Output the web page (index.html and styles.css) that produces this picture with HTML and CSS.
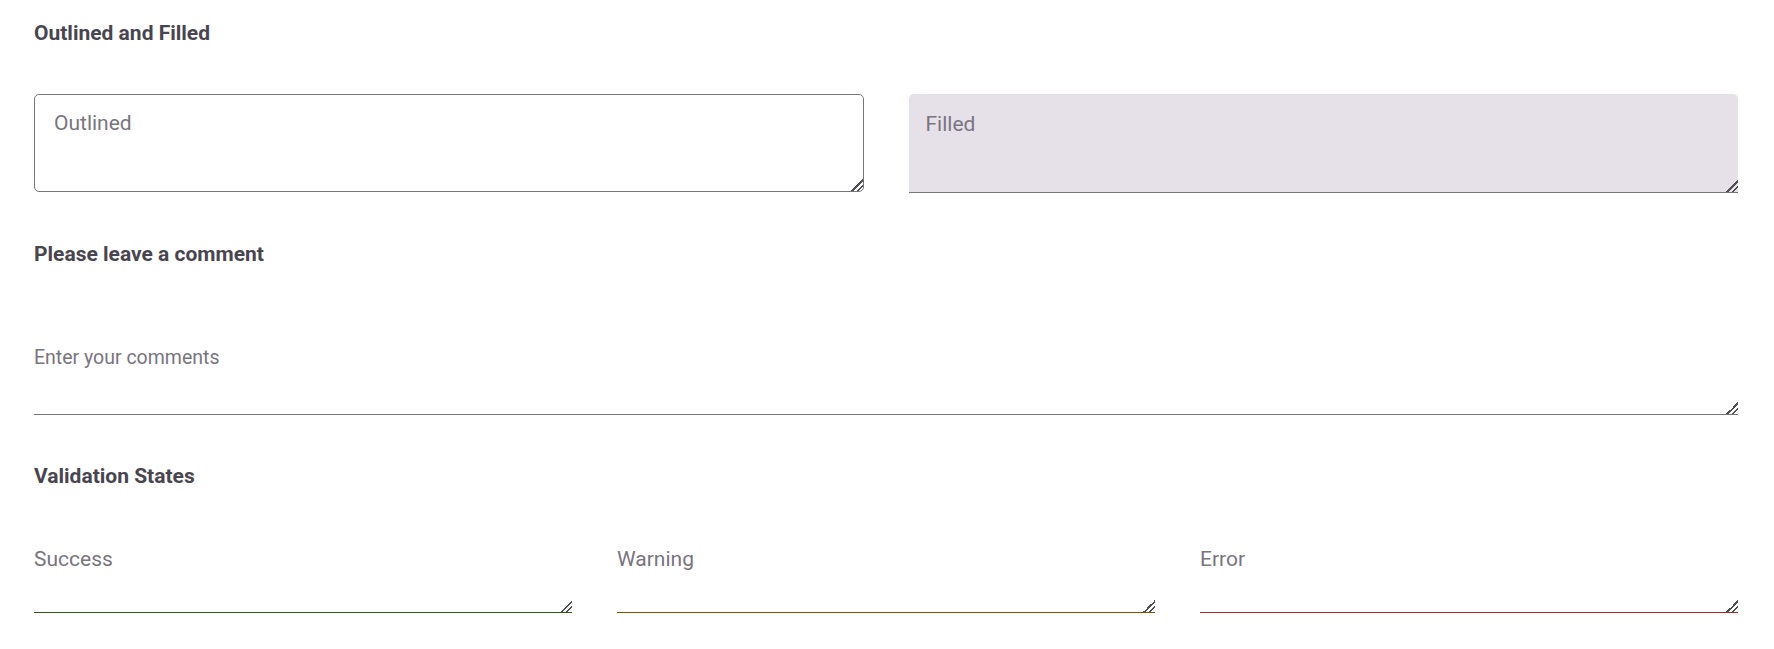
FILE: index.html
```html
<!DOCTYPE html>
<html lang="en">
<head>
<meta charset="utf-8">
<title>Text areas</title>
<link rel="stylesheet" href="styles.css">
</head>
<body>
<main class="page">
  <section class="section">
    <h3 class="heading">Outlined and Filled</h3>
    <div class="row row-2">
      <textarea class="ta ta-outlined" placeholder="Outlined"></textarea>
      <textarea class="ta ta-filled" placeholder="Filled"></textarea>
    </div>
  </section>
  <section class="section">
    <h3 class="heading">Please leave a comment</h3>
    <textarea class="ta ta-plain ta-comment" placeholder="Enter your comments"></textarea>
  </section>
  <section class="section">
    <h3 class="heading">Validation States</h3>
    <div class="row row-3">
      <textarea class="ta ta-plain ta-state ta-success" placeholder="Success"></textarea>
      <textarea class="ta ta-plain ta-state ta-warning" placeholder="Warning"></textarea>
      <textarea class="ta ta-plain ta-state ta-error" placeholder="Error"></textarea>
    </div>
  </section>
</main>
</body>
</html>
```
FILE: styles.css
```css
html, body {
  margin: 0;
  padding: 0;
  background: #ffffff;
}

body {
  font-family: Roboto, "Liberation Sans", Arial, sans-serif;
  color: #49454f;
}

.page {
  display: flex;
  flex-direction: column;
  gap: 49px;
  padding: 21px 36px 0 34px;
}

.section {
  display: flex;
  flex-direction: column;
  gap: 49px;
}

.heading {
  margin: 0;
  font-size: 21px;
  line-height: 24px;
  font-weight: 700;
  color: #49454f;
}

.row {
  display: grid;
  align-items: start;
  column-gap: 45px;
}

.row-2 {
  grid-template-columns: 1fr 1fr;
}

.row-3 {
  grid-template-columns: 1fr 1fr 1fr;
}

.ta {
  display: block;
  box-sizing: border-box;
  width: 100%;
  margin: 0;
  font-family: Roboto, "Liberation Sans", Arial, sans-serif;
  font-size: 21px;
  line-height: 24px;
  color: #1d1b20;
  background: transparent;
  border: none;
  outline: none;
  resize: vertical;
}

.ta::-webkit-resizer {
  background:
    linear-gradient(135deg,
      transparent 0 60%,
      #505050 60% 67%,
      transparent 67% 77%,
      #505050 77% 84%,
      transparent 84% 100%);
}

.ta::placeholder {
  color: #79747e;
  opacity: 1;
}

.ta-outlined {
  height: 98px;
  padding: 16px 19px;
  border: 1px solid #79747e;
  border-radius: 5px;
}

.ta-filled {
  height: 99px;
  padding: 18px 17px 16px;
  background: #e6e0e9;
  border-bottom: 1px solid #79747e;
  border-radius: 5px 5px 0 0;
}

.ta-plain {
  padding-left: 0;
  padding-right: 0;
  border-bottom: 1px solid #79747e;
}

.ta-comment {
  height: 100px;
  padding-top: 31px;
  font-size: 19.5px;
}

.ta-state {
  height: 76px;
  padding-top: 10px;
}

.ta-success {
  border-bottom-color: #31581a;
}

.ta-warning {
  border-bottom-color: #8b5000;
}

.ta-error {
  border-bottom-color: #b3261e;
}
```
